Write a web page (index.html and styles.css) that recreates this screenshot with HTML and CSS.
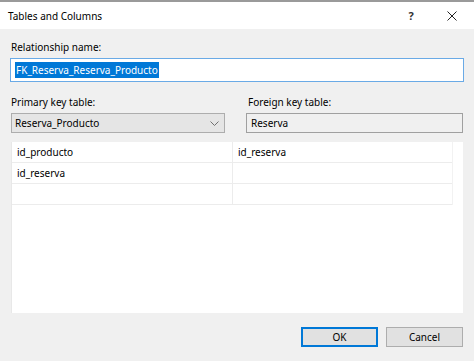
FILE: index.html
```html
<!DOCTYPE html>
<html>
<head>
<meta charset="utf-8">
<title>Tables and Columns</title>
<link rel="stylesheet" href="styles.css">
</head>
<body>
<div class="dialog">
  <div class="titlebar">
    <span class="title">Tables and Columns</span>
    <span class="tb-help">?</span>
    <span class="tb-close">
      <svg width="10" height="10" viewBox="0 0 10 10"><path d="M0.5 0.5 L9.5 9.5 M9.5 0.5 L0.5 9.5" stroke="#222" stroke-width="1" fill="none"/></svg>
    </span>
  </div>
  <div class="content">
    <div class="label">Relationship name:</div>
    <div class="textbox"><span class="sel">FK_Reserva_Reserva_Producto</span></div>
    <div class="tables">
      <div class="col-left">
        <div class="label">Primary key table:</div>
        <div class="combo">
          <span>Reserva_Producto</span>
          <svg class="chev" width="9" height="5" viewBox="0 0 9 5"><path d="M0.5 0.5 L4.5 4.5 L8.5 0.5" stroke="#707070" stroke-width="1" fill="none"/></svg>
        </div>
      </div>
      <div class="col-right">
        <div class="label">Foreign key table:</div>
        <div class="readonly">Reserva</div>
      </div>
    </div>
    <div class="grid">
      <div class="rows">
        <div class="row"><div class="cell c1">id_producto</div><div class="cell c2">id_reserva</div></div>
        <div class="row"><div class="cell c1">id_reserva</div><div class="cell c2"></div></div>
        <div class="row tall"><div class="cell c1"></div><div class="cell c2"></div></div>
      </div>
    </div>
    <div class="buttons">
      <div class="btn ok">OK</div>
      <div class="btn">Cancel</div>
    </div>
  </div>
</div>
</body>
</html>
```
FILE: styles.css
```css
html, body {
  margin: 0;
  padding: 0;
}
body {
  width: 474px;
  height: 361px;
  overflow: hidden;
  font-family: "Noto Sans", "DejaVu Sans", sans-serif;
  font-size: 10px;
  color: #000;
  background: #f0f0f0;
}
.dialog {
  width: 474px;
  height: 361px;
  border-top: 2px solid #9a9a9a;
  box-sizing: border-box;
  background: #f0f0f0;
}
.titlebar {
  height: 27px;
  background: #fff;
  display: flex;
  align-items: center;
  padding-left: 8px;
}
.title {
  flex: 1;
  font-size: 10px;
}
.tb-help {
  width: 38px;
  text-align: center;
  font-size: 11px;
  font-weight: bold;
  color: #333;
}
.tb-close {
  width: 44px;
  display: flex;
  justify-content: center;
  align-items: center;
}
.content {
  padding: 10px 10px 0 10px;
}
.label {
  height: 16px;
  line-height: 16px;
  padding-left: 1px;
}
.textbox {
  margin-top: 3px;
  height: 24px;
  box-sizing: border-box;
  border: 1px solid #6aaae6;
  background: #fff;
  display: flex;
  align-items: center;
  padding-left: 4px;
}
.sel {
  background: #0078d7;
  color: #fff;
  line-height: 16px;
  padding: 0 1px;
}
.tables {
  display: flex;
  margin-top: 12px;
}
.col-left {
  width: 214px;
  padding-left: 1px;
}
.col-left .label {
  padding-left: 0;
}
.col-right {
  margin-left: 21px;
  width: 217px;
}
.col-right .label {
  padding-left: 2px;
}
.combo {
  margin-top: 3px;
  height: 20px;
  box-sizing: border-box;
  border: 1px solid #adadad;
  background: #e5e5e5;
  display: flex;
  align-items: center;
  justify-content: space-between;
  padding: 0 5px 0 3px;
}
.readonly {
  margin-top: 3px;
  height: 20px;
  box-sizing: border-box;
  border: 1px solid #a0a0a0;
  background: #f0f0f0;
  display: flex;
  align-items: center;
  padding-left: 4px;
}
.grid {
  margin-top: 9px;
  margin-left: 1px;
  width: 452px;
  height: 171px;
  background: #fff;
  box-sizing: border-box;
  border-left: 1px solid #e8e8e8;
}
.rows {
  width: 440px;
  border-right: 1px solid #f2f2f2;
}
.row {
  display: flex;
  height: 20px;
  border-bottom: 1px solid #ececec;
}
.cell {
  display: flex;
  align-items: center;
  padding-left: 5px;
  box-sizing: border-box;
}
.c1 {
  width: 221px;
  border-right: 1px solid #ececec;
}
.c2 {
  flex: 1;
}
.buttons {
  display: flex;
  justify-content: flex-end;
  gap: 8px;
  margin-top: 14px;
  padding-right: 1px;
}
.btn {
  width: 77px;
  height: 20px;
  box-sizing: border-box;
  border: 1px solid #adadad;
  background: #e1e1e1;
  display: flex;
  align-items: center;
  justify-content: center;
}
.btn.ok {
  border: 2px solid #0078d7;
}
```
